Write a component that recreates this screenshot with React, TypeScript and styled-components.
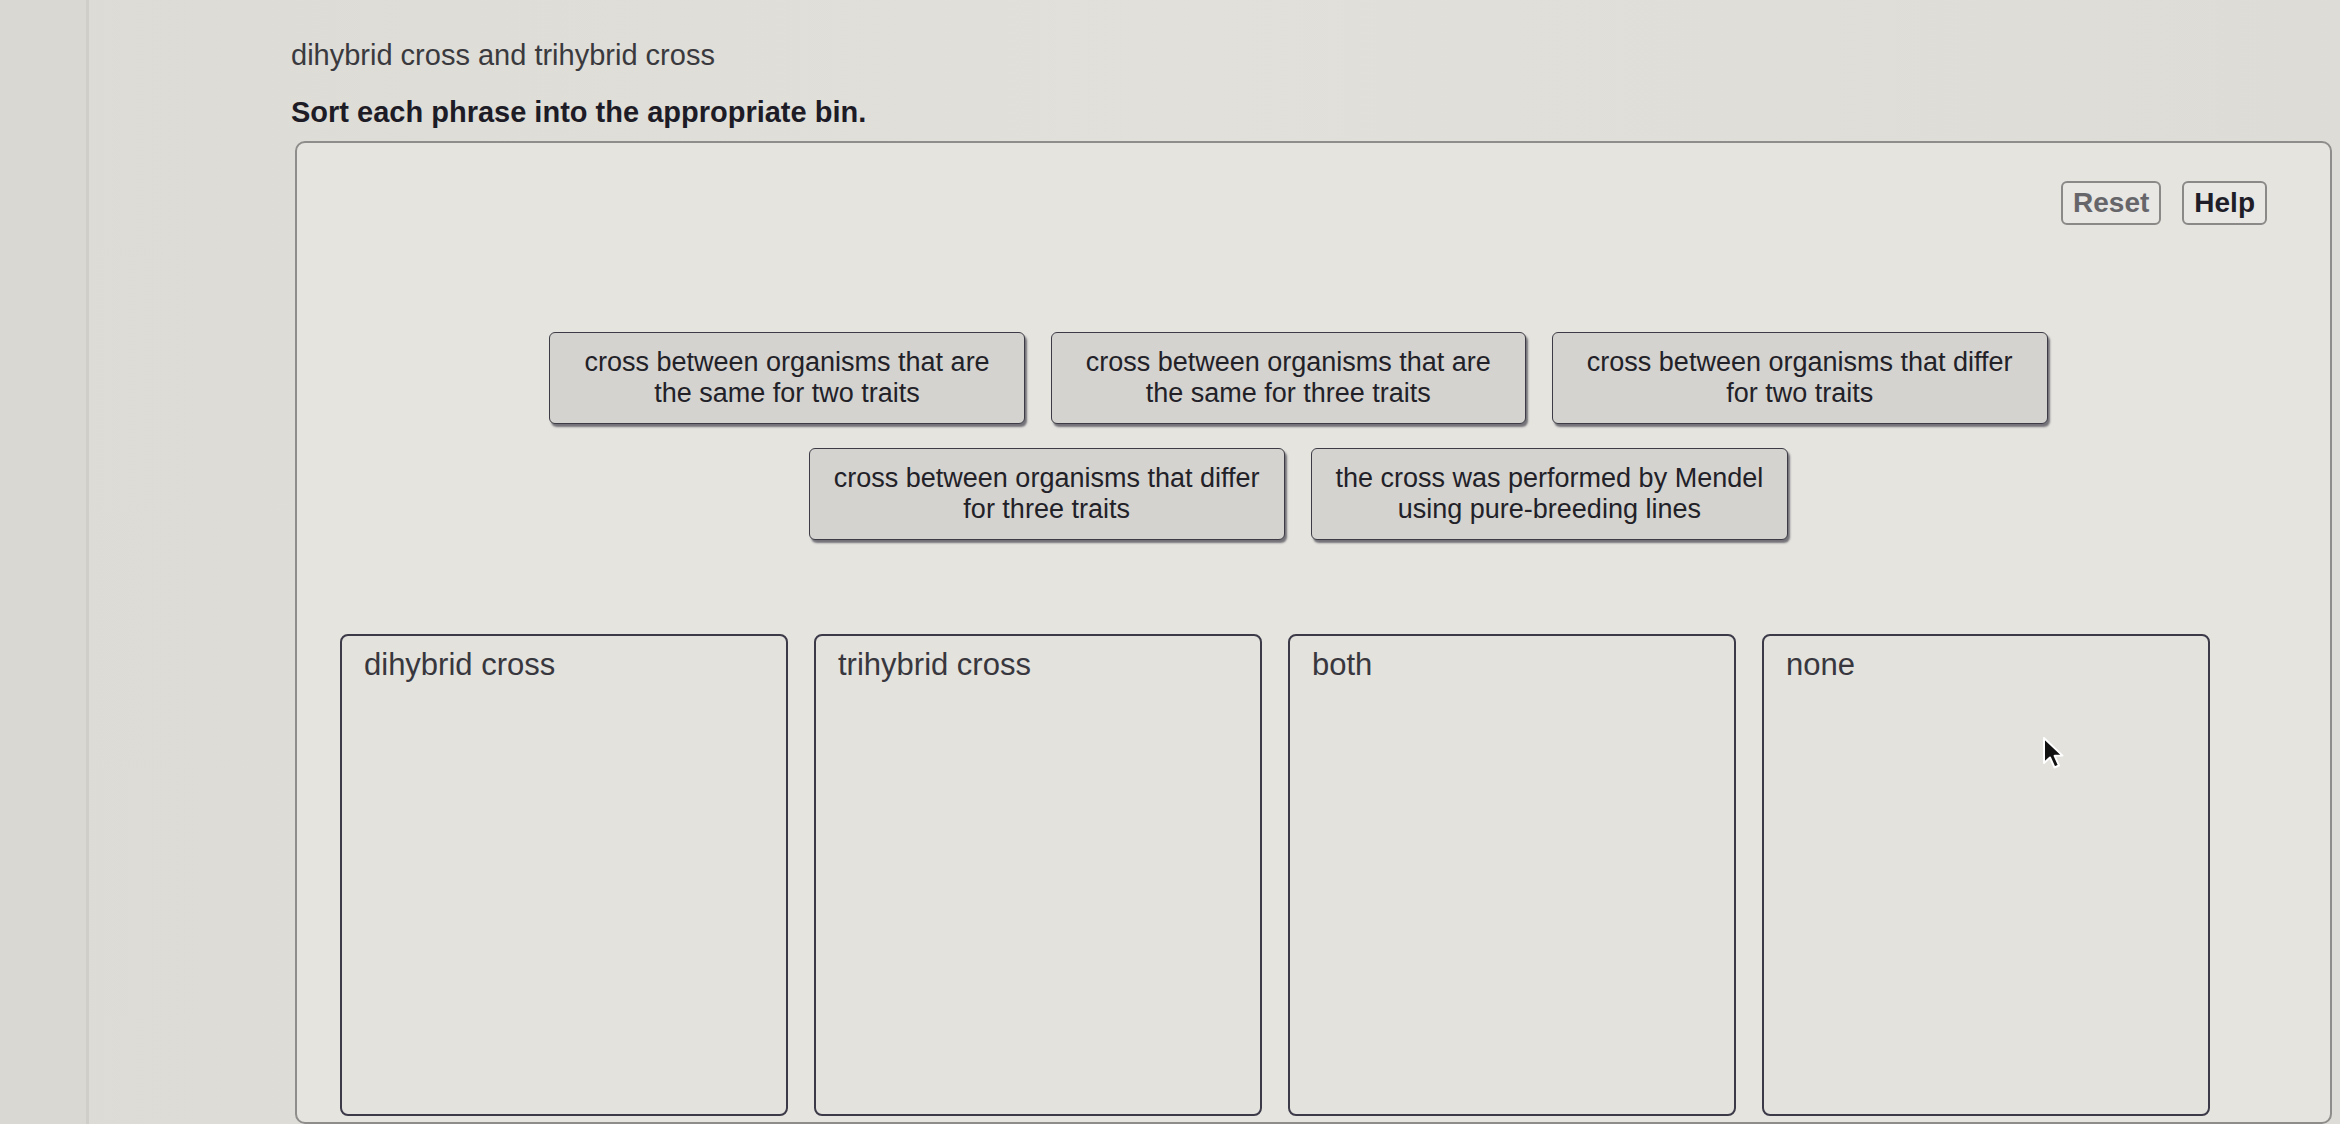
import React from 'react';
import styled, {createGlobalStyle} from 'styled-components';

const GlobalStyle = createGlobalStyle`
	html, body {
		margin: 0;
		padding: 0;
		background: #dfded9;
		font-family: "Liberation Sans", Arial, sans-serif;
	}
`;

const phrasesTop = [
	['cross between organisms that are', 'the same for two traits'],
	['cross between organisms that are', 'the same for three traits'],
	['cross between organisms that differ', 'for two traits'],
];

const phrasesBottom = [
	['cross between organisms that differ', 'for three traits'],
	['the cross was performed by Mendel', 'using pure-breeding lines'],
];

const bins = ['dihybrid cross', 'trihybrid cross', 'both', 'none'];

const Chip = (props: {lines: string[]; pad: number}) => (
	<ChipBox $pad={props.pad}>
		{props.lines.map((line, i) => (
			<ChipLine key={i}>{line}</ChipLine>
		))}
	</ChipBox>
);

const Cursor = () => (
	<CursorWrap>
		<svg width="26" height="36" viewBox="0 0 26 36">
			<path
				d="M2 2 L2 27 L8 21.5 L12.5 31.5 L17 29.5 L12.6 19.8 L20.5 19.6 Z"
				fill="#111"
				stroke="#fff"
				strokeWidth="2"
				strokeLinejoin="round"
			/>
		</svg>
	</CursorWrap>
);

export default function App() {
	return (
		<>
			<GlobalStyle />
			<Page>
				<Sidebar />
				<Main>
					<Title>dihybrid cross and trihybrid cross</Title>
					<Instruction>Sort each phrase into the appropriate bin.</Instruction>
					<Panel>
						<Toolbar>
							<ToolButton $muted>Reset</ToolButton>
							<ToolButton>Help</ToolButton>
						</Toolbar>
						<ChipArea>
							<ChipRow>
								{phrasesTop.map((p, i) => (
									<Chip key={i} lines={p} pad={34} />
								))}
							</ChipRow>
							<ChipRow>
								{phrasesBottom.map((p, i) => (
									<Chip key={i} lines={p} pad={24} />
								))}
							</ChipRow>
						</ChipArea>
						<BinRow>
							{bins.map(b => (
								<Bin key={b}>
									<BinLabel>{b}</BinLabel>
								</Bin>
							))}
						</BinRow>
					</Panel>
				</Main>
				<Cursor />
			</Page>
		</>
	);
}

const Page = styled.div`
	position: relative;
	display: flex;
	width: 2340px;
	height: 1124px;
	overflow: hidden;
	background: linear-gradient(90deg, #dcdbd6 0%, #e1e0db 50%, #dedcd7 100%);
`;

const Sidebar = styled.div`
	flex: 0 0 86px;
	background: #d9d8d3;
	border-right: 3px solid #cfcec9;
`;

const Main = styled.div`
	flex: 1;
	display: flex;
	flex-direction: column;
	padding: 38px 0 0 202px;
`;

const Title = styled.div`
	font-size: 29px;
	line-height: 34px;
	color: #3a3a3e;
`;

const Instruction = styled.div`
	margin-top: 23px;
	font-size: 29px;
	line-height: 34px;
	font-weight: bold;
	color: #1d1c26;
`;

const Panel = styled.div`
	margin: 12px 0 0 4px;
	width: 2037px;
	height: 1100px;
	box-sizing: border-box;
	border: 2px solid #8e8d8b;
	border-radius: 10px;
	background: #e5e4df;
	display: flex;
	flex-direction: column;
`;

const Toolbar = styled.div`
	display: flex;
	justify-content: flex-end;
	gap: 21px;
	padding: 38px 63px 0 0;
`;

const ToolButton = styled.div<{$muted?: boolean}>`
	height: 44px;
	box-sizing: border-box;
	padding: 0 10px;
	display: flex;
	align-items: center;
	border: 2px solid #8a8988;
	border-radius: 6px;
	background: #e8e7e3;
	font-size: 28px;
	font-weight: bold;
	color: ${props => (props.$muted ? '#66666a' : '#1f1e28')};
`;

const ChipArea = styled.div`
	margin-top: 107px;
	padding: 0 60px 0 30px;
	display: flex;
	flex-direction: column;
	gap: 24px;
`;

const ChipRow = styled.div`
	display: flex;
	justify-content: center;
	gap: 26px;
`;

const ChipBox = styled.div<{$pad: number}>`
	display: flex;
	flex-direction: column;
	align-items: center;
	padding: 14px ${props => props.$pad}px;
	border: 1.5px solid #3d3c46;
	border-radius: 6px;
	background: #d4d3cf;
	box-shadow: 2px 3px 2px rgba(40, 38, 52, 0.6);
`;

const ChipLine = styled.span`
	font-size: 27px;
	line-height: 31px;
	color: #222128;
	white-space: nowrap;
`;

const BinRow = styled.div`
	margin-top: 94px;
	padding-left: 43px;
	display: flex;
	gap: 26px;
`;

const Bin = styled.div`
	width: 448px;
	height: 482px;
	box-sizing: border-box;
	border: 2px solid #3c3a48;
	border-radius: 8px;
	background: #e3e2dd;
	padding: 10px 22px;
`;

const BinLabel = styled.div`
	font-size: 31px;
	line-height: 38px;
	color: #38373d;
`;

const CursorWrap = styled.div`
	position: absolute;
	left: 2042px;
	top: 736px;
`;
